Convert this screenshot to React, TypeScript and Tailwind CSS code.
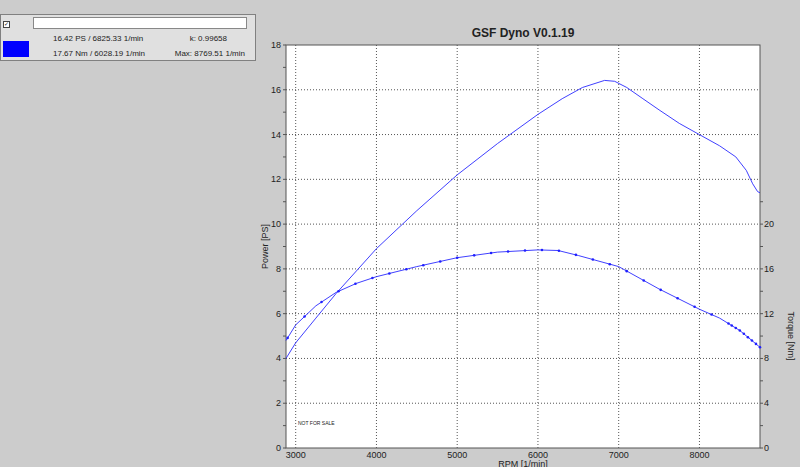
import React from 'react';

const X0 = 286, X1 = 760, Y0 = 448, Y1 = 45;
const rx = (r: number) => X0 + ((r - 2880) / (8750 - 2880)) * (X1 - X0);
const py = (p: number) => Y0 - (p / 18) * (Y0 - Y1);

const power: [number, number][] = [
  [2880, 4.0], [3000, 4.7], [3250, 5.8], [3500, 6.9], [4000, 8.9], [4500, 10.6], [5000, 12.2],
  [5500, 13.6], [6000, 14.9], [6300, 15.6], [6550, 16.1], [6825, 16.42], [6950, 16.38], [7100, 16.1],
  [7300, 15.6], [7500, 15.1], [7750, 14.5], [8000, 14.0], [8250, 13.5], [8450, 13.0], [8580, 12.4],
  [8660, 11.8], [8720, 11.45], [8750, 11.4],
];
const torque: [number, number][] = [
  [2880, 4.8], [3000, 5.5], [3250, 6.35], [3500, 6.95], [3750, 7.35], [4000, 7.65], [4500, 8.1],
  [5000, 8.5], [5500, 8.75], [6000, 8.85], [6250, 8.82], [6500, 8.6], [7000, 8.1], [7500, 7.1],
  [8000, 6.2], [8250, 5.8], [8500, 5.25], [8650, 4.8], [8750, 4.5],
];

const line = (d: [number, number][]) => d.map(([r, p]) => `${rx(r).toFixed(1)},${py(p).toFixed(1)}`).join(' ');

function interp(d: [number, number][], r: number) {
  for (let i = 0; i < d.length - 1; i++) {
    if (r >= d[i][0] && r <= d[i + 1][0]) {
      const t = (r - d[i][0]) / (d[i + 1][0] - d[i][0]);
      return d[i][1] + t * (d[i + 1][1] - d[i][1]);
    }
  }
  return d[d.length - 1][1];
}

const dots: number[] = [];
for (let r = 2900; r < 8400; r += 210) dots.push(r);
for (let r = 8400; r <= 8750; r += 50) dots.push(r);

export default function App() {
  const font = { fontFamily: '"Liberation Sans", Arial, sans-serif' };
  return (
    <div className="flex h-[467px] w-[800px] bg-[#cccccc]" style={font}>
      <div className="w-[256px] shrink-0 pt-[14px]">
        <div className="flex h-[47px] w-[256px] border border-[#808080] bg-[#e0e0e0] text-[8px] text-[#222]">
          <div className="flex w-[32px] flex-col justify-between px-[2px] pt-[6px] pb-[3px]">
            <div className="h-[7px] w-[7px] border border-[#444] bg-white text-[6px] leading-[5px]">✓</div>
            <div className="h-[16px] w-[26px] bg-[#0000ff]" />
          </div>
          <div className="flex flex-1 flex-col pt-[2px] pr-[8px]">
            <div className="h-[14px] border border-[#888] bg-white" />
            <div className="mt-[4px] flex justify-between pl-[20px] pr-[20px]"><span>16.42 PS / 6825.33 1/min</span><span>k: 0.99658</span></div>
            <div className="mt-[3px] flex justify-between pl-[20px] pr-[2px]"><span>17.67 Nm / 6028.19 1/min</span><span>Max: 8769.51 1/min</span></div>
          </div>
        </div>
      </div>
      <svg width="544" height="467" viewBox="256 0 544 467" className="shrink-0" fontSize="9" fill="#222">
        <text x="523" y="37" textAnchor="middle" fontSize="12" fontWeight="bold">GSF Dyno V0.1.19</text>
        <rect x={X0} y={Y1} width={X1 - X0} height={Y0 - Y1} fill="white" stroke="#555" />
        {[2, 4, 6, 8, 10, 12, 14, 16].map(p => (
          <line key={p} x1={X0} x2={X1} y1={py(p)} y2={py(p)} stroke="#555" strokeDasharray="1 2" />
        ))}
        {[3000, 4000, 5000, 6000, 7000, 8000].map(r => (
          <g key={r}>
            <line x1={rx(r)} x2={rx(r)} y1={Y1} y2={Y0} stroke="#555" strokeDasharray="1 2" />
            <text x={rx(r)} y={Y0 + 10} textAnchor="middle">{r}</text>
          </g>
        ))}
        {Array.from({ length: 19 }, (_, i) => i).map(p => (
          <g key={p}>
            <line x1={X0 - 3} x2={X0} y1={py(p)} y2={py(p)} stroke="#555" />
            {p % 2 === 0 && <text x={X0 - 5} y={py(p) + 3} textAnchor="end">{p}</text>}
          </g>
        ))}
        {Array.from({ length: 12 }, (_, i) => i * 2).map(n => (
          <g key={n}>
            <line x1={X1} x2={X1 + 3} y1={py(n / 2)} y2={py(n / 2)} stroke="#555" />
            {n % 4 === 0 && <text x={X1 + 4} y={py(n / 2) + 3}>{n}</text>}
          </g>
        ))}
        <text transform={`translate(268 ${(Y0 + Y1) / 2}) rotate(-90)`} textAnchor="middle">Power [PS]</text>
        <text transform={`translate(788 336) rotate(90)`} textAnchor="middle">Torque [Nm]</text>
        <text x={(X0 + X1) / 2} y="467" textAnchor="middle">RPM [1/min]</text>
        <text x="298" y="425" fontSize="5">NOT FOR SALE</text>
        <polyline points={line(power)} fill="none" stroke="#2a2aff" strokeWidth="0.9" />
        <polyline points={line(torque)} fill="none" stroke="#2a2aff" strokeWidth="0.9" />
        {dots.map(r => (
          <circle key={r} cx={rx(r)} cy={py(interp(torque, r))} r="1.3" fill="#2020ff" />
        ))}
      </svg>
    </div>
  );
}
